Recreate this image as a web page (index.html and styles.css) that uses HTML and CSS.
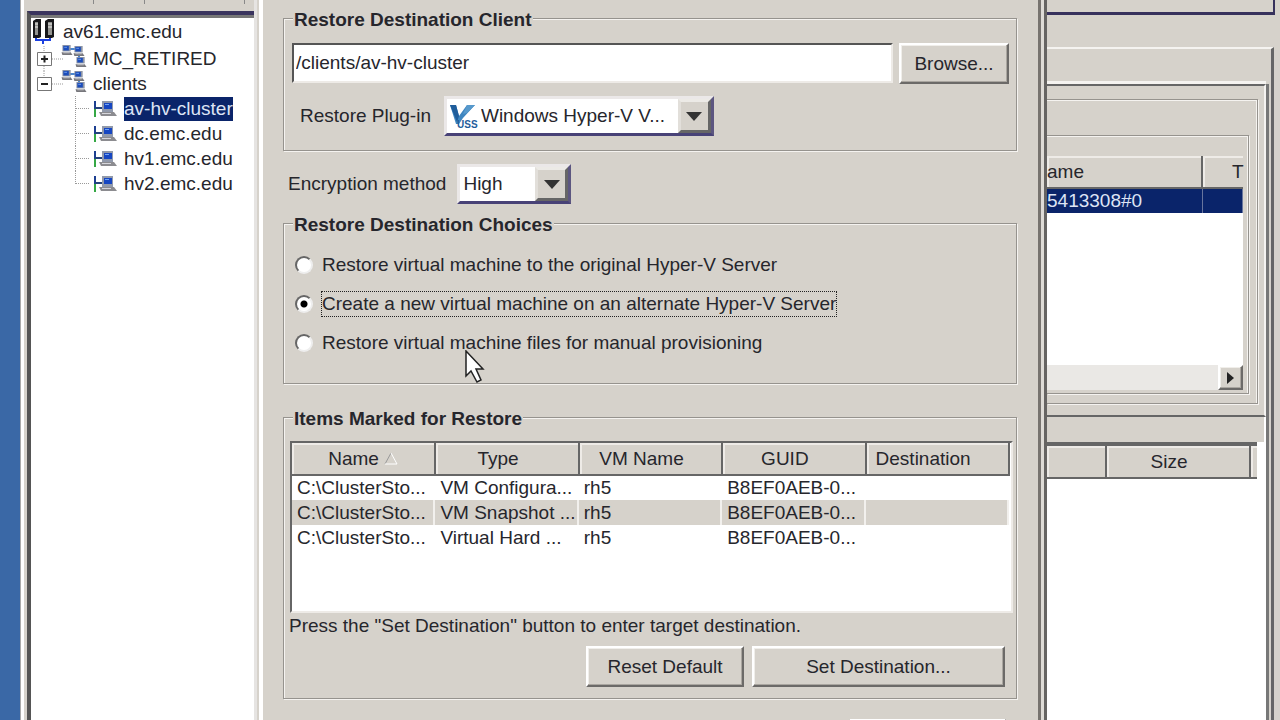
FILE: index.html
```html
<!DOCTYPE html>
<html lang="en">
<head>
    <meta charset="UTF-8">
    <title>Restore Options</title>
    <link rel="stylesheet" href="styles.css">
</head>
<body>
    <!-- shared icons -->
    <svg class="defs" width="0" height="0">
        <symbol id="pc" viewBox="0 0 12 12">
            <path d="M1 0h9v7H1z" fill="#8d95a5"/>
            <path d="M2 1h6v5H2z" fill="#1c4dbb"/>
            <path d="M3 2h3v1H3z" fill="#6fa0ee"/>
            <path d="M0 8h10l2 3H1z" fill="#77777c"/>
            <path d="M2 8h7v1H2z" fill="#c9c9cf"/>
        </symbol>
        <symbol id="domain" viewBox="0 0 26 24">
            <path d="M9 4h5M18 8v5" stroke="#4a86cf" stroke-width="2"/>
            <use href="#pc" x="0" y="0" width="12" height="11"/>
            <use href="#pc" x="12" y="1" width="12" height="11"/>
            <use href="#pc" x="14" y="12" width="12" height="11"/>
        </symbol>
        <symbol id="client" viewBox="0 0 24 18">
            <path d="M1 1v8" stroke="#1d3f91" stroke-width="2"/>
            <path d="M1 9v8" stroke="#35a845" stroke-width="2"/>
            <path d="M1 8h7" stroke="#24427c" stroke-width="2"/>
            <path d="M8 1h11v11H8z" fill="#929aab"/>
            <path d="M10 3h8v6h-8z" fill="#1747c2"/>
            <path d="M11 4h4v1h-4z" fill="#71a4f6"/>
            <path d="M5 12h15l3 4H7z" fill="#8c8c90"/>
            <path d="M8 13h9v1H8z" fill="#d6d6dc"/>
        </symbol>
    </svg>

    <div class="desktop"></div>

    <div class="tree-pane">
        <div class="toolbar"><span></span><span></span><span></span></div>
        <ul class="tree">
            <li class="root">
                <svg width="24" height="26" viewBox="0 0 24 26">
                    <path d="M1 2l3-2h5v18l-2 1H1zM13 2l3-2h6v18l-2 1h-7z" fill="#17171a"/>
                    <path d="M3 3h3v13H3zM16 3h4v13h-4z" fill="#93938f"/>
                    <path d="M3 5h3M3 8h3M16 5h4M16 8h4" stroke="#eee"/>
                    <path d="M4 19v2h14v-2M11 21v4" fill="none" stroke="#1d41e0" stroke-width="2"/>
                </svg>
                <span>av61.emc.edu</span>
            </li>
            <li class="domain">
                <svg class="toggle" width="26" height="26" viewBox="0 0 26 26">
                    <path d="M7 0v26M15 13h11" stroke="#999" stroke-dasharray="1 1"/>
                    <path d="M.5 6.5h14v13H.5z" fill="#fff" stroke="#777"/>
                    <path d="M4 13h7M7.500 9.500v7" stroke="#222" stroke-width="2"/>
                </svg>
                <svg width="26" height="24"><use href="#domain"/></svg>
                <span>MC_RETIRED</span>
            </li>
            <li class="domain">
                <svg class="toggle" width="26" height="26" viewBox="0 0 26 26">
                    <path d="M7 0v6M15 13h11" stroke="#999" stroke-dasharray="1 1"/>
                    <path d="M.5 6.500h14v13H.5z" fill="#fff" stroke="#777"/>
                    <path d="M4 13h7" stroke="#222" stroke-width="2"/>
                </svg>
                <svg width="26" height="24"><use href="#domain"/></svg>
                <span>clients</span>
            </li>
            <li class="client"><i></i><svg width="24" height="18"><use href="#client"/></svg><span class="selected">av-hv-cluster</span></li>
            <li class="client"><i></i><svg width="24" height="18"><use href="#client"/></svg><span>dc.emc.edu</span></li>
            <li class="client"><i></i><svg width="24" height="18"><use href="#client"/></svg><span>hv1.emc.edu</span></li>
            <li class="client"><i></i><svg width="24" height="18"><use href="#client"/></svg><span>hv2.emc.edu</span></li>
        </ul>
    </div>

    <form class="dialog">
        <fieldset class="destination">
            <legend>Restore Destination Client</legend>
            <div class="path-row">
                <input type="text" class="path" value="/clients/av-hv-cluster" aria-label="Destination client">
                <button type="button">Browse...</button>
            </div>
            <div class="plugin-row">
                <label for="plugin">Restore Plug-in</label>
                <div class="combo combo-plugin">
                    <svg width="28" height="26" viewBox="0 0 28 26">
                        <path d="M0 2h6l3 11 8-11h8L13 15l-4 6H6z" fill="#3f86c0"/>
                        <path d="M0 2h6l3 11-2 6z" fill="#1f5d9b"/>
                        <path d="M17 2h8l-8 8-4 1z" fill="#5799cc"/>
                        <text x="7" y="25" class="vss">USS</text>
                    </svg>
                    <select id="plugin"><option>Windows Hyper-V V...</option></select>
                    <span class="arrow"></span>
                </div>
            </div>
        </fieldset>

        <div class="encryption-row">
            <label for="encryption">Encryption method</label>
            <div class="combo combo-encryption">
                <select id="encryption"><option>High</option></select>
                <span class="arrow"></span>
            </div>
        </div>

        <fieldset class="choices">
            <legend>Restore Destination Choices</legend>
            <div class="choice">
                <input type="radio" name="choice" id="original">
                <label for="original">Restore virtual machine to the original Hyper-V Server</label>
            </div>
            <div class="choice">
                <input type="radio" name="choice" id="alternate" checked>
                <label for="alternate" class="focused">Create a new virtual machine on an alternate Hyper-V Server</label>
            </div>
            <div class="choice">
                <input type="radio" name="choice" id="manual">
                <label for="manual">Restore virtual machine files for manual provisioning</label>
            </div>
            <svg class="cursor" width="20" height="34" viewBox="0 0 20 34">
                <path d="M1 1v25l5-5 6 11 4-2-5-11h7z" fill="#fff" stroke="#222" stroke-width="1.500"/>
            </svg>
        </fieldset>

        <fieldset class="items">
            <legend>Items Marked for Restore</legend>
            <div class="table-box">
                <table>
                    <thead>
                        <tr>
                            <th>Name <svg width="14" height="13" viewBox="0 0 14 13"><path d="M1 12L7 1" stroke="#999" fill="none"/><path d="M7 1l6 11H1" stroke="#fff" fill="none"/></svg></th>
                            <th class="mid">Type</th>
                            <th class="mid">VM Name</th>
                            <th class="mid">GUID</th>
                            <th class="left">Destination</th>
                        </tr>
                    </thead>
                    <tbody>
                        <tr><td>C:\ClusterSto...</td><td>VM Configura...</td><td>rh5</td><td>B8EF0AEB-0...</td><td></td></tr>
                        <tr class="marked"><td>C:\ClusterSto...</td><td>VM Snapshot ...</td><td>rh5</td><td>B8EF0AEB-0...</td><td></td></tr>
                        <tr><td>C:\ClusterSto...</td><td>Virtual Hard ...</td><td>rh5</td><td>B8EF0AEB-0...</td><td></td></tr>
                    </tbody>
                </table>
            </div>
            <p>Press the "Set Destination" button to enter target destination.</p>
            <div class="buttons">
                <button type="button" class="reset">Reset Default</button>
                <button type="button" class="set">Set Destination...</button>
            </div>
        </fieldset>
        <div class="footer"><button type="button" aria-label="OK"></button></div>
    </form>

    <div class="back-pane">
        <div class="tabs"></div>
        <div class="sheet">
            <div class="panel">
                <div class="group">
                    <div class="group inner">
                        <table class="backups">
                            <thead><tr><th>ame</th><th class="cut">T</th></tr></thead>
                            <tbody><tr><td>5413308#0</td><td></td></tr></tbody>
                        </table>
                        <div class="scrollbar"><button type="button" aria-label="Scroll right"></button></div>
                    </div>
                </div>
            </div>
            <div class="files">
                <div class="files-head"><span></span><span>Size</span><span></span></div>
            </div>
        </div>
    </div>
</body>
</html>
```

FILE: styles.css
```css
* {
    box-sizing: border-box;
}
body {
    margin: 0;
    height: 100vh;
    display: flex;
    overflow: hidden;
    background-color: #d6d2cb;
    color: #26262c;
    font-family: "Liberation Sans", Arial, sans-serif;
    font-size: 19px;
    line-height: 24px;
}
.defs {
    position: absolute;
}
button, input, select {
    font: inherit;
    color: inherit;
    border-radius: 0;
}
button {
    padding: 0;
    background-color: #d6d2cb;
    border: 2px solid;
    border-color: #fff #6c6a68 #6c6a68 #fff;
    box-shadow: inset -1px -1px #aaa6a0, inset 1px 1px #f0eeea;
}
.desktop {
    width: 20px;
    background-color: #3a68a6;
}

/* client tree */
.tree-pane {
    width: 245px;
    display: flex;
    flex-direction: column;
    padding-left: 6px;
    border-left: 1px solid #aaa;
    background: linear-gradient(to right, #fff 3px, #d6d2cb 3px, #d6d2cb 233px, #e6e4e2 233px, #e6e4e2 236px, #d6d2cb 236px, #d6d2cb 238px, #fff 238px, #fff 242px, #d6d2cb 242px);
}
.toolbar {
    height: 11px;
    display: flex;
    gap: 50px;
    padding-left: 66px;
}
.toolbar span {
    width: 1px;
    height: 4px;
    background-color: #888;
}
.toolbar span:last-child {
    margin-left: 49px;
}
.tree {
    flex: 1;
    width: 227px;
    margin: 0;
    padding: 3px 0 0 1px;
    list-style: none;
    background-color: #fff;
    border-top: 4px solid #3a345e;
    border-left: 4px solid #555;
    box-shadow: inset 0 3px #777;
}
.tree li {
    height: 25px;
    display: flex;
    align-items: center;
    white-space: nowrap;
}
.tree .root {
    height: 28px;
    gap: 7px;
}
.tree .domain {
    padding-left: 5px;
}
.domain svg:nth-child(2) {
    margin: 0 6px 4px -2px;
}
.tree .client {
    padding-left: 43px;
}
.client i {
    width: 15px;
    height: 25px;
    margin-right: 4px;
    border-left: 1px dotted #999;
    background: repeating-linear-gradient(to right, #999 0 1px, transparent 1px 2px) 0 12px / 15px 1px no-repeat;
}
.client:last-child i {
    height: 13px;
    margin-bottom: 12px;
}
.client span {
    margin-left: 6px;
}
.tree .selected {
    background-color: #0a246a;
    color: #dde4f5;
}

/* restore dialog */
.dialog {
    flex: 1;
    min-width: 0;
    padding: 6px 27px 0 18px;
    border-right: 3px solid #666462;
    box-shadow: inset -3px 0 #dedbd6, inset -6px 0 #77736f;
}
fieldset {
    min-width: 0;
    margin: 0;
    padding: 0 7px;
    border: 1px solid #96938e;
    box-shadow: 1px 1px #f5f3f0, inset 1px 1px #f5f3f0;
}
legend {
    margin-left: 2px;
    padding: 3px 1px 0;
    background-color: #d6d2cb;
    font-weight: bold;
    line-height: 22px;
}
.path-row {
    display: flex;
    gap: 6px;
    margin-top: 12px;
}
.path {
    flex: 1;
    min-width: 0;
    height: 40px;
    margin-left: 1px;
    padding: 0 2px;
    background-color: #fff;
    border: 2px solid;
    border-color: #555 #eeebe7 #eeebe7 #555;
}
.path-row button {
    width: 110px;
    height: 41px;
}
.plugin-row, .encryption-row {
    display: flex;
    align-items: center;
}
.plugin-row {
    gap: 13px;
    padding: 12px 0 14px 9px;
}
.combo {
    display: flex;
    align-items: center;
    height: 40px;
    background-color: #fff;
    border: 3px solid;
    border-color: #ebe8e8 #5c5680 #484277 #ebe8e8;
}
.combo-plugin {
    width: 270px;
    padding-left: 3px;
}
.combo-encryption {
    width: 114px;
}
.combo select {
    flex: 1;
    min-width: 0;
    height: 100%;
    padding: 0 3px;
    border: 0;
    background: transparent;
    appearance: none;
}
.combo .arrow {
    width: 33px;
    height: 100%;
    display: flex;
    align-items: center;
    justify-content: center;
    background-color: #d6d2cb;
    border: 3px solid;
    border-color: #eceae6 #666 #666 #e2dfda;
}
.arrow::before {
    content: "";
    border: 8px solid transparent;
    border-top: 9px solid #333;
    border-bottom: 0;
}
.vss {
    fill: #1f5d9b;
    font-size: 10px;
    font-weight: bold;
}
.encryption-row {
    gap: 11px;
    padding: 13px 0 7px 5px;
}
.choices {
    position: relative;
    height: 173px;
}
.choice {
    display: flex;
    align-items: center;
    height: 39px;
    padding-left: 4px;
}
.choices legend + .choice {
    margin-top: 9px;
}
.choice input {
    appearance: none;
    width: 18px;
    height: 18px;
    margin: 0 9px 0 0;
    border: 2px solid;
    border-color: #666 #eee #eee #666;
    border-radius: 50%;
    background-color: #fff;
}
.choice input:checked {
    background-image: radial-gradient(#000 3px, transparent 4px);
}
.choice .focused {
    outline: 1px dotted #222;
}
.cursor {
    position: absolute;
    left: 181px;
    top: 114px;
}
.items {
    margin-top: 21px;
    height: 294px;
}
.table-box {
    height: 172px;
    margin: 11px -4px 0 -1px;
    background-color: #fff;
    border: 2px solid;
    border-color: #666 #eeebe7 #eeebe7 #666;
}
table {
    border-collapse: collapse;
    table-layout: fixed;
    width: 100%;
}
.table-box table {
    width: calc(100% - 1px);
}
th {
    height: 32px;
    padding: 0;
    font-weight: normal;
    background-color: #d6d2cb;
    border-right: 2px solid #666;
    border-bottom: 2px solid #666;
    box-shadow: inset 2px 2px #eeebe7;
}
th.mid {
    padding-right: 18px;
}
th.left {
    padding-left: 9px;
    text-align: left;
}
td {
    height: 25px;
    padding: 0 0 0 5px;
    white-space: nowrap;
}
.marked td {
    background-color: #d6d2cb;
    box-shadow: inset -2px 0 #f2f0ed;
}
.items p {
    margin: 1px 0 8px -2px;
}
.buttons {
    display: flex;
    justify-content: flex-end;
    gap: 8px;
    padding-right: 4px;
}
.buttons button {
    height: 41px;
}
.reset {
    width: 158px;
}
.set {
    width: 253px;
}
.footer {
    display: flex;
    justify-content: flex-end;
    padding: 20px 11px 0 0;
}
.footer button {
    width: 156px;
    height: 41px;
}

/* main window behind the dialog */
.back-pane {
    width: 233px;
    display: flex;
    flex-direction: column;
}
.tabs {
    height: 15px;
    margin-right: 5px;
    border-right: 2px solid #37315c;
    border-bottom: 3px solid #37315c;
}
.sheet {
    flex: 1;
    display: flex;
    flex-direction: column;
    margin: 32px 6px 0 0;
    padding: 35px 5px 0 0;
    border-top: 2px solid #f5f3f0;
    border-right: 3px solid #666;
}
.panel {
    height: 333px;
    padding: 13px 6px 0 0;
    border: 2px solid;
    border-color: #666 #f5f3f0 #666 transparent;
    border-left: 0;
    box-shadow: 0 -3px #f5f3f0, 3px 0 #777;
}
.group {
    height: 305px;
    padding: 35px 8px 0 0;
    border: 1px solid #96938e;
    border-left: 0;
    box-shadow: 1px 1px #f5f3f0, inset -1px 1px #f5f3f0;
}
.group.inner {
    height: 259px;
    padding: 20px 5px 0 0;
}
.backups {
    background-color: #fff;
    border-bottom: 152px solid #fff;
}
.backups th {
    text-align: left;
}
.backups th:first-child {
    width: 155px;
}
.backups .cut {
    padding-left: 29px;
    border-right: 0;
}
.backups td {
    padding: 0;
    background-color: #0a246a;
    color: #dde4f5;
    border-right: 1px solid #68759d;
}
.scrollbar {
    display: flex;
    justify-content: flex-end;
    background-color: #eae8e5;
}
.scrollbar button {
    width: 25px;
    height: 25px;
    display: flex;
    align-items: center;
    justify-content: center;
}
.scrollbar button::before {
    content: "";
    border: 6px solid transparent;
    border-left: 7px solid #222;
    border-right: 0;
}
.files {
    flex: 1;
    padding-top: 25px;
    background: linear-gradient(#d6d2cb 25px, #fff 25px);
    border-right: 2px solid #fff;
    box-shadow: 3px 0 #777;
}
.files-head {
    display: flex;
    height: 37px;
    margin-right: 7px;
    background-color: #d6d2cb;
    border-top: 4px solid #666;
    border-bottom: 2px solid #666;
}
.files-head span {
    width: 144px;
    line-height: 31px;
    text-align: center;
    border-right: 2px solid #666;
    box-shadow: inset 2px 2px #eeebe7;
    padding-right: 18px;
}
.files-head span:first-child {
    width: 60px;
}
.files-head span:last-child {
    flex: 1;
    padding: 0;
    border: 0;
}
```
